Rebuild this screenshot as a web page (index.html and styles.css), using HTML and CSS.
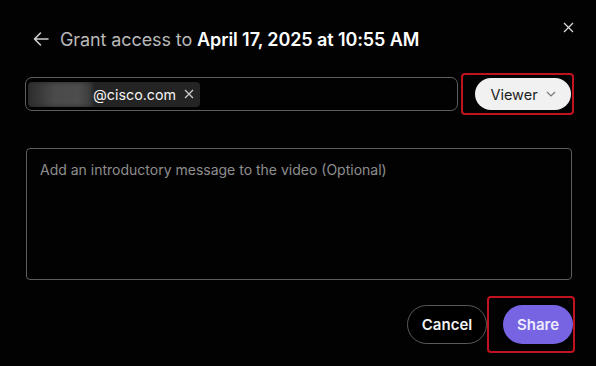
FILE: index.html
```html
<!DOCTYPE html>
<html>
<head>
<meta charset="utf-8">
<link rel="stylesheet" href="styles.css">
</head>
<body>
<div class="dialog">
  <button class="close" aria-label="Close">
    <svg width="11" height="11" viewBox="0 0 11 11"><path d="M1 1L10 10M10 1L1 10" stroke="#d8d8d8" stroke-width="1.3" fill="none"/></svg>
  </button>
  <div class="header">
    <svg class="back" width="16" height="14" viewBox="0 0 16 14"><path d="M15 7H1.5M7.5 1L1.5 7L7.5 13" stroke="#d0d0d0" stroke-width="1.6" fill="none" stroke-linecap="round" stroke-linejoin="round"/></svg>
    <h1 class="title">Grant access to <strong>April 17, 2025 at 10:55 AM</strong></h1>
  </div>
  <div class="row">
    <div class="input">
      <span class="chip"><span class="blur"></span><span class="email">@cisco.com</span><span class="chip-x">
        <svg width="10" height="10" viewBox="0 0 10 10"><path d="M1 1L9 9M9 1L1 9" stroke="#cfcfcf" stroke-width="1.2" fill="none"/></svg></span></span>
    </div>
    <div class="mark mark-viewer">
      <button class="viewer">Viewer
        <svg width="10" height="6" viewBox="0 0 10 6"><path d="M1 1L5 5L9 1" stroke="#777" stroke-width="1.2" fill="none"/></svg>
      </button>
    </div>
  </div>
  <div class="message">Add an introductory message to the video (Optional)</div>
  <div class="footer">
    <button class="cancel">Cancel</button>
    <div class="mark mark-share">
      <button class="share">Share</button>
    </div>
  </div>
</div>
</body>
</html>
```
FILE: styles.css
```css
html, body {
  margin: 0;
  padding: 0;
  background: #000;
  width: 596px;
  height: 366px;
  overflow: hidden;
  font-family: Inter, "Liberation Sans", sans-serif;
  color: #fff;
}
.dialog {
  position: relative;
  box-sizing: border-box;
  width: 596px;
  height: 366px;
  padding: 26px 21px 0 25px;
  background: #020202;
}
button {
  font-family: inherit;
  cursor: pointer;
}
.close {
  position: absolute;
  top: 22px;
  left: 563px;
  background: none;
  border: 0;
  padding: 0;
  width: 12px;
  height: 12px;
  display: flex;
}
.header {
  display: flex;
  align-items: center;
  height: 26px;
  padding-left: 8px;
}
.back {
  margin-right: 11px;
}
.title {
  margin: 0;
  font-size: 18px;
  font-weight: 400;
  color: #b9b9b9;
  letter-spacing: -0.1px;
}
.title strong {
  color: #fff;
  font-weight: 600;
}
.row {
  display: flex;
  align-items: center;
  margin-top: 21px;
}
.input {
  box-sizing: border-box;
  width: 433px;
  height: 34px;
  border: 1px solid #5e5e5e;
  border-radius: 7px;
  padding: 3px 2px;
  display: flex;
  align-items: center;
}
.chip {
  display: flex;
  align-items: center;
  height: 25px;
  width: 172px;
  background: #242424;
  border-radius: 4px;
  overflow: hidden;
}
.blur {
  width: 64px;
  height: 100%;
  background: linear-gradient(90deg, #2c2c2c, #4a4a4a 40%, #4d4d4d 80%, #3a3a3a);
  filter: blur(2px);
}
.email {
  font-size: 14.3px;
  color: #f4f4f4;
  margin-left: 1px;
}
.chip-x {
  display: flex;
  margin-left: 8px;
}
.mark {
  box-sizing: border-box;
  border: 2px solid #c2111f;
  border-radius: 4px;
  display: flex;
  align-items: center;
}
.mark-viewer {
  margin-left: 3px;
  width: 113px;
  height: 42px;
  padding-left: 12px;
}
.viewer {
  height: 32px;
  width: 96px;
  border: 0;
  border-radius: 16px;
  background: #f1f1f1;
  color: #1e1e1e;
  font-size: 14.5px;
  font-weight: 400;
  display: flex;
  align-items: center;
  justify-content: center;
  gap: 8px;
  padding: 0;
}
.message {
  box-sizing: border-box;
  margin-top: 33px;
  margin-left: 1px;
  width: 546px;
  height: 132px;
  border: 1px solid #5e5e5e;
  border-radius: 4px;
  padding: 12px 13px;
  font-size: 14px;
  color: #8e8e8e;
}
.footer {
  display: flex;
  justify-content: flex-end;
  align-items: center;
  margin-top: 16px;
  width: 550px;
}
.cancel {
  box-sizing: border-box;
  width: 80px;
  height: 39px;
  border: 1px solid #5a5a5a;
  border-radius: 20px;
  background: #000;
  color: #f2f2f2;
  font-size: 15px;
  font-weight: 600;
  padding: 0;
}
.mark-share {
  width: 88px;
  height: 57px;
  padding-left: 14px;
}
.share {
  width: 70px;
  height: 39px;
  border: 0;
  border-radius: 20px;
  background: #7764e2;
  color: #eeeaff;
  font-size: 15px;
  font-weight: 600;
  padding: 0;
}
```
